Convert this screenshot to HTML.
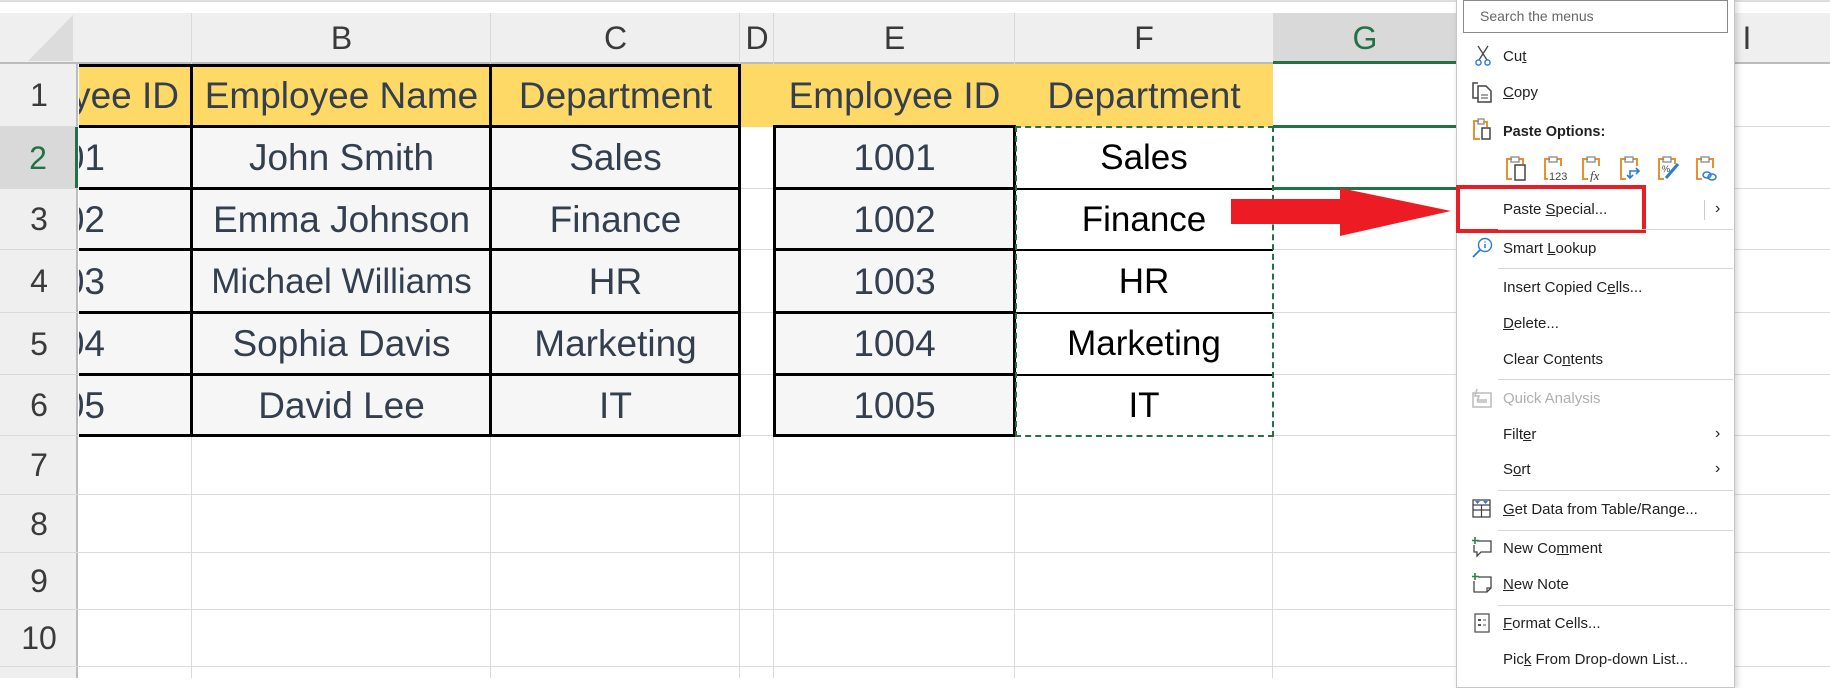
<!DOCTYPE html>
<html><head><meta charset="utf-8"><style>
*{margin:0;padding:0;box-sizing:border-box}
body{width:1830px;height:678px;overflow:hidden;background:#fff;position:relative;font-family:"Liberation Sans",sans-serif}
.a{position:absolute}
.t{position:absolute;display:flex;align-items:center;justify-content:center;font-size:37px;color:#333f4f;white-space:nowrap;overflow:hidden}
.f{font-size:35px;color:#000}
.h{position:absolute;display:flex;align-items:center;justify-content:center;font-size:32px;color:#3a3a3a}
.gl{position:absolute;background:#dadada}
.bk{position:absolute;background:#000}
.mi{position:absolute;left:1503px;font-size:15px;color:#222;line-height:20px}
.sep{position:absolute;left:1498px;width:235px;height:1px;background:#d6d6d6}
.ic{position:absolute}
u{text-decoration:underline}
</style></head><body>
<div class="a" style="left:0;top:0;width:1830px;height:13px;background:#fff;border-top:2px solid #ddd"></div>
<div class="a" style="left:0;top:13px;width:1830px;height:51px;background:#efefef;border-bottom:2px solid #bcbcbc"></div>
<div class="a" style="left:0;top:64px;width:78px;height:614px;background:#efefef;border-right:2px solid #bcbcbc"></div>
<svg class="a" style="left:18px;top:13px" width="60" height="50"><polygon points="55,2 55,48 10,48" fill="#dcdcdc"/></svg>
<div class="a" style="left:1273px;top:13px;width:184px;height:51px;background:#d9d9d9;border-bottom:3px solid #217346"></div>
<div class="a" style="left:0;top:127px;width:78px;height:62px;background:#d9d9d9;border-right:3px solid #217346"></div>
<div class="h" style="left:192px;top:13px;width:299px;height:51px">B</div>
<div class="h" style="left:491px;top:13px;width:249px;height:51px">C</div>
<div class="h" style="left:740px;top:13px;width:34px;height:51px">D</div>
<div class="h" style="left:774px;top:13px;width:241px;height:51px">E</div>
<div class="h" style="left:1015px;top:13px;width:258px;height:51px">F</div>
<div class="h" style="left:1273px;top:13px;width:184px;height:51px;color:#217346">G</div>
<div class="h" style="left:1730px;top:13px;width:34px;height:51px">I</div>
<div class="gl" style="left:191px;top:13px;width:1px;height:51px"></div>
<div class="gl" style="left:490px;top:13px;width:1px;height:51px"></div>
<div class="gl" style="left:739px;top:13px;width:1px;height:51px"></div>
<div class="gl" style="left:773px;top:13px;width:1px;height:51px"></div>
<div class="gl" style="left:1014px;top:13px;width:1px;height:51px"></div>
<div class="h" style="left:0;top:64px;width:78px;height:63px">1</div>
<div class="h" style="left:0;top:127px;width:76px;height:62px;color:#217346">2</div>
<div class="h" style="left:0;top:189px;width:78px;height:61px">3</div>
<div class="h" style="left:0;top:250px;width:78px;height:63px">4</div>
<div class="h" style="left:0;top:313px;width:78px;height:62px">5</div>
<div class="h" style="left:0;top:375px;width:78px;height:61px">6</div>
<div class="h" style="left:0;top:436px;width:78px;height:59px">7</div>
<div class="h" style="left:0;top:495px;width:78px;height:58px">8</div>
<div class="h" style="left:0;top:553px;width:78px;height:57px">9</div>
<div class="h" style="left:0;top:610px;width:78px;height:57px">10</div>
<div class="gl" style="left:0;top:126px;width:1830px;height:1px"></div>
<div class="gl" style="left:0;top:188px;width:1830px;height:1px"></div>
<div class="gl" style="left:0;top:249px;width:1830px;height:1px"></div>
<div class="gl" style="left:0;top:312px;width:1830px;height:1px"></div>
<div class="gl" style="left:0;top:374px;width:1830px;height:1px"></div>
<div class="gl" style="left:0;top:435px;width:1830px;height:1px"></div>
<div class="gl" style="left:0;top:494px;width:1830px;height:1px"></div>
<div class="gl" style="left:0;top:552px;width:1830px;height:1px"></div>
<div class="gl" style="left:0;top:609px;width:1830px;height:1px"></div>
<div class="gl" style="left:0;top:666px;width:1830px;height:1px"></div>
<div class="gl" style="left:191px;top:64px;width:1px;height:614px"></div>
<div class="gl" style="left:490px;top:64px;width:1px;height:614px"></div>
<div class="gl" style="left:739px;top:64px;width:1px;height:614px"></div>
<div class="gl" style="left:773px;top:64px;width:1px;height:614px"></div>
<div class="gl" style="left:1014px;top:64px;width:1px;height:614px"></div>
<div class="gl" style="left:1272px;top:64px;width:1px;height:614px"></div>
<div class="a" style="left:79px;top:64px;width:1194px;height:63px;background:#ffd966"></div>
<div class="a" style="left:79px;top:127px;width:661px;height:309px;background:#f6f6f6"></div>
<div class="a" style="left:774px;top:127px;width:241px;height:309px;background:#f6f6f6"></div>
<div class="a" style="left:1015px;top:127px;width:258px;height:309px;background:#fff"></div>
<div class="a" style="left:79px;top:64px;width:112px;height:372px;overflow:hidden">
<div class="t" style="right:12px;top:0;height:63px;justify-content:flex-end">Employee ID</div>
<div class="t" style="right:86px;top:63px;height:62px;justify-content:flex-end">1001</div>
<div class="t" style="right:86px;top:125px;height:61px;justify-content:flex-end">1002</div>
<div class="t" style="right:86px;top:186px;height:63px;justify-content:flex-end">1003</div>
<div class="t" style="right:86px;top:249px;height:62px;justify-content:flex-end">1004</div>
<div class="t" style="right:86px;top:311px;height:61px;justify-content:flex-end">1005</div>
</div>
<div class="t" style="left:192px;top:64px;width:299px;height:63px">Employee Name</div>
<div class="t" style="left:491px;top:64px;width:249px;height:63px">Department</div>
<div class="t" style="left:774px;top:64px;width:241px;height:63px">Employee ID</div>
<div class="t" style="left:1015px;top:64px;width:258px;height:63px">Department</div>
<div class="t" style="left:192px;top:127px;width:299px;height:62px">John Smith</div>
<div class="t" style="left:192px;top:189px;width:299px;height:61px">Emma Johnson</div>
<div class="t" style="left:192px;top:250px;width:299px;height:63px;font-size:35px">Michael Williams</div>
<div class="t" style="left:192px;top:313px;width:299px;height:62px">Sophia Davis</div>
<div class="t" style="left:192px;top:375px;width:299px;height:61px">David Lee</div>
<div class="t" style="left:491px;top:127px;width:249px;height:62px">Sales</div>
<div class="t" style="left:491px;top:189px;width:249px;height:61px">Finance</div>
<div class="t" style="left:491px;top:250px;width:249px;height:63px">HR</div>
<div class="t" style="left:491px;top:313px;width:249px;height:62px">Marketing</div>
<div class="t" style="left:491px;top:375px;width:249px;height:61px">IT</div>
<div class="t" style="left:774px;top:127px;width:241px;height:62px">1001</div>
<div class="t" style="left:774px;top:189px;width:241px;height:61px">1002</div>
<div class="t" style="left:774px;top:250px;width:241px;height:63px">1003</div>
<div class="t" style="left:774px;top:313px;width:241px;height:62px">1004</div>
<div class="t" style="left:774px;top:375px;width:241px;height:61px">1005</div>
<div class="t f" style="left:1015px;top:127px;width:258px;height:62px">Sales</div>
<div class="t f" style="left:1015px;top:189px;width:258px;height:61px">Finance</div>
<div class="t f" style="left:1015px;top:250px;width:258px;height:63px">HR</div>
<div class="t f" style="left:1015px;top:313px;width:258px;height:62px">Marketing</div>
<div class="t f" style="left:1015px;top:375px;width:258px;height:61px">IT</div>
<div class="bk" style="left:79px;top:64px;width:662px;height:3px"></div>
<div class="bk" style="left:79px;top:125px;width:662px;height:3px"></div>
<div class="bk" style="left:79px;top:187px;width:662px;height:3px"></div>
<div class="bk" style="left:79px;top:248px;width:662px;height:3px"></div>
<div class="bk" style="left:79px;top:311px;width:662px;height:3px"></div>
<div class="bk" style="left:79px;top:373px;width:662px;height:3px"></div>
<div class="bk" style="left:79px;top:434px;width:662px;height:3px"></div>
<div class="bk" style="left:190px;top:64px;width:3px;height:373px"></div>
<div class="bk" style="left:489px;top:64px;width:3px;height:373px"></div>
<div class="bk" style="left:738px;top:64px;width:3px;height:373px"></div>
<div class="bk" style="left:773px;top:125px;width:243px;height:3px"></div>
<div class="bk" style="left:773px;top:187px;width:243px;height:3px"></div>
<div class="bk" style="left:773px;top:248px;width:243px;height:3px"></div>
<div class="bk" style="left:773px;top:311px;width:243px;height:3px"></div>
<div class="bk" style="left:773px;top:373px;width:243px;height:3px"></div>
<div class="bk" style="left:773px;top:434px;width:243px;height:3px"></div>
<div class="bk" style="left:773px;top:125px;width:3px;height:312px"></div>
<div class="bk" style="left:1013px;top:125px;width:3px;height:312px"></div>
<div class="bk" style="left:1015px;top:188px;width:258px;height:2px"></div>
<div class="bk" style="left:1015px;top:249px;width:258px;height:2px"></div>
<div class="bk" style="left:1015px;top:312px;width:258px;height:2px"></div>
<div class="bk" style="left:1015px;top:374px;width:258px;height:2px"></div>
<div class="a" style="left:1015px;top:126px;width:259px;height:311px;border:2px dashed #217346"></div>
<div class="a" style="left:1273px;top:125px;width:190px;height:3px;background:#217346"></div>
<div class="a" style="left:1273px;top:187px;width:190px;height:3px;background:#217346"></div>
<svg class="a" style="left:1231px;top:186px" width="224" height="52"><polygon points="0,13 109,13 109,2 220,25 109,50 109,38 0,38" fill="#ed1c24"/></svg>
<div class="a" style="left:1456px;top:-2px;width:279px;height:690px;background:#fff;border:1px solid #c6c6c6;box-shadow:2px 2px 6px rgba(0,0,0,.18)"></div>
<div class="a" style="left:1463px;top:0;width:265px;height:33px;border:1px solid #8a8a8a;font-size:14px;color:#666;padding:7px 0 0 16px">Search the menus</div>
<svg class="ic" style="left:1474px;top:45px" width="18" height="22"><path d="M4,1 L13,15 M14,1 L5,15" stroke="#444" stroke-width="1.3" fill="none"/><circle cx="4.5" cy="17.5" r="2.6" fill="none" stroke="#2b7cd3" stroke-width="1.4"/><circle cx="13.5" cy="17.5" r="2.6" fill="none" stroke="#2b7cd3" stroke-width="1.4"/></svg>
<div class="mi" style="top:47px">Cu<u>t</u></div>
<svg class="ic" style="left:1472px;top:81px" width="22" height="22"><path d="M6,2 H1 V17 H6" fill="none" stroke="#444" stroke-width="1.5"/><path d="M6,5 H14 L19,10 V21 H6 Z" fill="none" stroke="#444" stroke-width="1.5"/><path d="M9,14 H16 M9,17 H16" stroke="#444"/></svg>
<div class="mi" style="top:83px"><u>C</u>opy</div>
<svg class="ic" style="left:1473px;top:118px" width="22" height="24"><path d="M6,3 H1 V21 H7" fill="none" stroke="#e8922f" stroke-width="2"/><rect x="5" y="1" width="6" height="5" fill="none" stroke="#888" stroke-width="1.3"/><path d="M10,4 H14 V9" fill="none" stroke="#e8922f" stroke-width="2"/><rect x="9" y="10" width="8" height="11" fill="#fff" stroke="#444" stroke-width="1.5"/></svg>
<div class="mi" style="top:122px;font-weight:bold;font-size:14.5px">Paste Options:</div>
<svg class="ic" style="left:1506px;top:156px" width="225" height="26">
<g fill="none" stroke-width="2"><path d="M6,3 H1 V23 H6" stroke="#e8922f"/><path d="M13,3 H17 V8" stroke="#e8922f"/><rect x="5" y="1" width="8" height="5" stroke="#888" stroke-width="1.3"/><rect x="9" y="9" width="10" height="15" fill="#fff" stroke="#444" stroke-width="1.5"/></g>
<g transform="translate(38,0)" fill="none" stroke-width="2"><path d="M6,3 H1 V23 H4" stroke="#e8922f"/><path d="M13,3 H17 V10" stroke="#e8922f"/><rect x="5" y="1" width="8" height="5" stroke="#888" stroke-width="1.3"/><text x="5" y="24" font-size="11" fill="#444" stroke="none" font-family="Liberation Sans">123</text></g>
<g transform="translate(76,0)" fill="none" stroke-width="2"><path d="M6,3 H1 V23 H6" stroke="#e8922f"/><path d="M13,3 H17 V10" stroke="#e8922f"/><rect x="5" y="1" width="8" height="5" stroke="#888" stroke-width="1.3"/><text x="8" y="24" font-size="13" font-style="italic" fill="#444" stroke="none" font-family="Liberation Serif">fx</text></g>
<g transform="translate(114,0)" fill="none" stroke-width="2"><path d="M6,3 H1 V23 H6" stroke="#e8922f"/><path d="M13,3 H17 V10" stroke="#e8922f"/><rect x="5" y="1" width="8" height="5" stroke="#888" stroke-width="1.3"/><path d="M10,22 V15 H19 M16,12 L19,15 L16,18 M7,19 L10,22 L13,19" stroke="#2b7cd3" stroke-width="1.6"/></g>
<g transform="translate(152,0)" fill="none" stroke-width="2"><path d="M6,3 H1 V23 H6" stroke="#e8922f"/><path d="M13,3 H17 V8" stroke="#e8922f"/><rect x="5" y="1" width="8" height="5" stroke="#888" stroke-width="1.3"/><path d="M20,8 L8,22" stroke="#2b7cd3" stroke-width="3"/><text x="4" y="16" font-size="9" fill="#444" stroke="none">%</text></g>
<g transform="translate(190,0)" fill="none" stroke-width="2"><path d="M6,3 H1 V23 H6" stroke="#e8922f"/><path d="M13,3 H17 V12" stroke="#e8922f"/><rect x="5" y="1" width="8" height="5" stroke="#888" stroke-width="1.3"/><ellipse cx="11" cy="19" rx="4" ry="3" stroke="#2b7cd3" stroke-width="1.5"/><ellipse cx="16" cy="21" rx="4" ry="3" stroke="#2b7cd3" stroke-width="1.5"/></g>
</svg>
<div class="a" style="left:1456px;top:185px;width:190px;height:48px;border:4px solid #e81d25"></div>
<div class="mi" style="top:200px">Paste <u>S</u>pecial...</div>
<div class="a" style="left:1704px;top:200px;width:1px;height:20px;background:#ccc"></div>
<div class="mi" style="left:1715px;top:199px;font-size:16px">&#8250;</div>
<div class="sep" style="top:229px"></div>
<svg class="ic" style="left:1472px;top:237px" width="22" height="22"><circle cx="13" cy="8" r="6.5" fill="none" stroke="#2b7cd3" stroke-width="1.4"/><path d="M8,13 L1,20" stroke="#2b7cd3" stroke-width="1.8"/><path d="M13,7 V11 M13,4.5 V5.5" stroke="#2b7cd3" stroke-width="1.5"/></svg>
<div class="mi" style="top:239px">Smart <u>L</u>ookup</div>
<div class="sep" style="top:268px"></div>
<div class="mi" style="top:278px">Insert Copied C<u>e</u>lls...</div>
<div class="mi" style="top:314px"><u>D</u>elete...</div>
<div class="mi" style="top:350px">Clear Co<u>n</u>tents</div>
<div class="sep" style="top:379px"></div>
<svg class="ic" style="left:1472px;top:388px" width="22" height="22"><rect x="1" y="5" width="18" height="14" fill="none" stroke="#bbb" stroke-width="1.5"/><rect x="5" y="11" width="10" height="4" fill="#ccc"/><path d="M5,1 L3,8 H7 L5,13" stroke="#bbb" stroke-width="1.5" fill="none"/></svg>
<div class="mi" style="top:389px;color:#b0b0b0">Quick Analysis</div>
<div class="mi" style="top:425px">Filt<u>e</u>r</div>
<div class="mi" style="left:1715px;top:424px;font-size:16px">&#8250;</div>
<div class="mi" style="top:460px">S<u>o</u>rt</div>
<div class="mi" style="left:1715px;top:459px;font-size:16px">&#8250;</div>
<div class="sep" style="top:490px"></div>
<svg class="ic" style="left:1472px;top:499px" width="22" height="22"><rect x="1" y="1" width="17" height="17" fill="none" stroke="#444" stroke-width="1.3"/><path d="M1,6 H18 M1,11 H18 M9.5,6 V18" stroke="#444" stroke-width="1.2"/><path d="M3,2 H8 L5.5,5 Z M11,2 H16 L13.5,5 Z" fill="#2b7cd3"/></svg>
<div class="mi" style="top:500px"><u>G</u>et Data from Table/Range...</div>
<div class="sep" style="top:530px"></div>
<svg class="ic" style="left:1472px;top:537px" width="22" height="22"><path d="M5,4 H19 V15 H9 L5,19 V15 H2 V8" fill="none" stroke="#444" stroke-width="1.3"/><path d="M3,0 V7 M0,3.5 H7" stroke="#1e8a3c" stroke-width="1.6"/></svg>
<div class="mi" style="top:539px">New Co<u>m</u>ment</div>
<svg class="ic" style="left:1472px;top:573px" width="22" height="22"><path d="M6,4 H19 V15 L15,19 H2 V8" fill="none" stroke="#444" stroke-width="1.3"/><path d="M15,19 V15 H19" fill="none" stroke="#444" stroke-width="1.2"/><path d="M3,0 V7 M0,3.5 H7" stroke="#1e8a3c" stroke-width="1.6"/></svg>
<div class="mi" style="top:575px"><u>N</u>ew Note</div>
<div class="sep" style="top:605px"></div>
<svg class="ic" style="left:1474px;top:613px" width="20" height="22"><rect x="1" y="1" width="14" height="18" fill="none" stroke="#555" stroke-width="1.3"/><rect x="4" y="6" width="3" height="2" fill="#555"/><rect x="4" y="11" width="3" height="2" fill="#555"/><path d="M9,7 H12 M9,12 H12" stroke="#555"/></svg>
<div class="mi" style="top:614px"><u>F</u>ormat Cells...</div>
<div class="mi" style="top:650px">Pic<u>k</u> From Drop-down List...</div>
</body></html>
